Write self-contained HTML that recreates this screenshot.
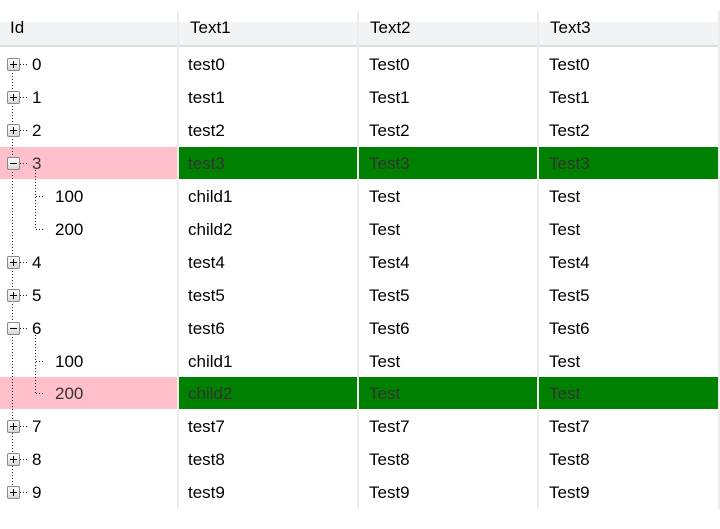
<!DOCTYPE html>
<html><head><style>
body{margin:0;width:720px;height:529px;background:#fff;font-family:"Liberation Sans",sans-serif;font-size:17px;color:#000;position:relative;overflow:hidden}
.hdr{position:absolute;top:22px;left:0;width:718px;height:23px;background:#f2f3f5;border-bottom:2px solid #dcdcdc}
.ht{position:absolute;top:18px;line-height:20px;font-size:17px}
.vs{position:absolute;width:2px;background:#ececec;top:11px;height:498px}
.row{position:absolute;left:0;width:718px;height:33px}
.c{position:absolute;top:7px;line-height:20px}
.pink{position:absolute;left:0;width:178px;height:32px;background:#ffc0cb}
.green{position:absolute;left:179px;width:539px;height:32px;background:#008000}
.sel .c{color:#333}
.box{position:absolute;left:7px;width:11px;height:11px;border:1px solid #8a8a8a;border-radius:2px;background:linear-gradient(#fff,#d8d8d8);box-sizing:content-box}
.box:before{content:"";position:absolute;left:2px;top:5px;width:7px;height:1px;background:#000}
.box.p:after{content:"";position:absolute;left:5px;top:2px;width:1px;height:7px;background:#000}
.hd{position:absolute;height:1px;width:9px;background:repeating-linear-gradient(90deg,#222 0 1px,transparent 1px 3px)}
.vd{position:absolute;width:1px;background:repeating-linear-gradient(180deg,#222 0 1px,transparent 1px 3px)}
</style></head><body>
<div class="hdr"></div>
<div class="ht" style="left:10px">Id</div>
<div class="ht" style="left:190px">Text1</div>
<div class="ht" style="left:370px">Text2</div>
<div class="ht" style="left:550px">Text3</div>

<div class="pink" style="top:147px"></div><div class="green" style="top:147px"></div>
<div class="pink" style="top:377px"></div><div class="green" style="top:377px"></div>
<div class="vs" style="left:177px"></div>
<div class="vs" style="left:357px"></div>
<div class="vs" style="left:537px"></div>
<div class="vs" style="left:718px"></div>

<div class="vd" style="left:12px;top:64px;height:428px"></div>
<div class="vd" style="left:35px;top:170px;height:59px"></div>
<div class="vd" style="left:35px;top:335px;height:58px"></div>

<div class="row" style="top:48px"><div class="box p" style="top:10px"></div><div class="hd" style="left:20px;top:16px"></div><div class="c" style="left:32px">0</div><div class="c" style="left:188px">test0</div><div class="c" style="left:369px">Test0</div><div class="c" style="left:549px">Test0</div></div>
<div class="row" style="top:81px"><div class="box p" style="top:10px"></div><div class="hd" style="left:20px;top:16px"></div><div class="c" style="left:32px">1</div><div class="c" style="left:188px">test1</div><div class="c" style="left:369px">Test1</div><div class="c" style="left:549px">Test1</div></div>
<div class="row" style="top:114px"><div class="box p" style="top:10px"></div><div class="hd" style="left:20px;top:16px"></div><div class="c" style="left:32px">2</div><div class="c" style="left:188px">test2</div><div class="c" style="left:369px">Test2</div><div class="c" style="left:549px">Test2</div></div>
<div class="row sel" style="top:147px"><div class="box" style="top:10px"></div><div class="hd" style="left:20px;top:16px"></div><div class="c" style="left:32px">3</div><div class="c" style="left:188px">test3</div><div class="c" style="left:369px">Test3</div><div class="c" style="left:549px">Test3</div></div>
<div class="row" style="top:180px"><div class="hd" style="left:36px;top:16px"></div><div class="c" style="left:55px">100</div><div class="c" style="left:188px">child1</div><div class="c" style="left:369px">Test</div><div class="c" style="left:549px">Test</div></div>
<div class="row" style="top:213px"><div class="hd" style="left:36px;top:16px"></div><div class="c" style="left:55px">200</div><div class="c" style="left:188px">child2</div><div class="c" style="left:369px">Test</div><div class="c" style="left:549px">Test</div></div>
<div class="row" style="top:246px"><div class="box p" style="top:10px"></div><div class="hd" style="left:20px;top:16px"></div><div class="c" style="left:32px">4</div><div class="c" style="left:188px">test4</div><div class="c" style="left:369px">Test4</div><div class="c" style="left:549px">Test4</div></div>
<div class="row" style="top:279px"><div class="box p" style="top:10px"></div><div class="hd" style="left:20px;top:16px"></div><div class="c" style="left:32px">5</div><div class="c" style="left:188px">test5</div><div class="c" style="left:369px">Test5</div><div class="c" style="left:549px">Test5</div></div>
<div class="row" style="top:312px"><div class="box" style="top:10px"></div><div class="hd" style="left:20px;top:16px"></div><div class="c" style="left:32px">6</div><div class="c" style="left:188px">test6</div><div class="c" style="left:369px">Test6</div><div class="c" style="left:549px">Test6</div></div>
<div class="row" style="top:345px"><div class="hd" style="left:36px;top:16px"></div><div class="c" style="left:55px">100</div><div class="c" style="left:188px">child1</div><div class="c" style="left:369px">Test</div><div class="c" style="left:549px">Test</div></div>
<div class="row sel" style="top:377px"><div class="hd" style="left:36px;top:16px"></div><div class="c" style="left:55px">200</div><div class="c" style="left:188px">child2</div><div class="c" style="left:369px">Test</div><div class="c" style="left:549px">Test</div></div>
<div class="row" style="top:410px"><div class="box p" style="top:10px"></div><div class="hd" style="left:20px;top:16px"></div><div class="c" style="left:32px">7</div><div class="c" style="left:188px">test7</div><div class="c" style="left:369px">Test7</div><div class="c" style="left:549px">Test7</div></div>
<div class="row" style="top:443px"><div class="box p" style="top:10px"></div><div class="hd" style="left:20px;top:16px"></div><div class="c" style="left:32px">8</div><div class="c" style="left:188px">test8</div><div class="c" style="left:369px">Test8</div><div class="c" style="left:549px">Test8</div></div>
<div class="row" style="top:476px"><div class="box p" style="top:10px"></div><div class="hd" style="left:20px;top:16px"></div><div class="c" style="left:32px">9</div><div class="c" style="left:188px">test9</div><div class="c" style="left:369px">Test9</div><div class="c" style="left:549px">Test9</div></div>
</body></html>
